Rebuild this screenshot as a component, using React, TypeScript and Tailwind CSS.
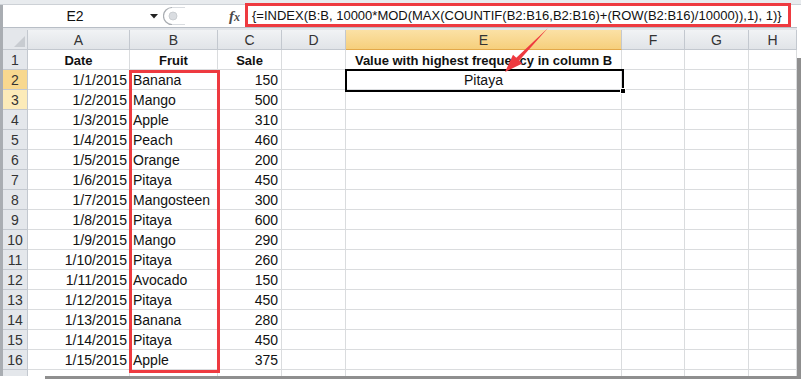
const rows: [string, string, string][] = [
  ['1/1/2015', 'Banana', '150'],
  ['1/2/2015', 'Mango', '500'],
  ['1/3/2015', 'Apple', '310'],
  ['1/4/2015', 'Peach', '460'],
  ['1/5/2015', 'Orange', '200'],
  ['1/6/2015', 'Pitaya', '450'],
  ['1/7/2015', 'Mangosteen', '300'],
  ['1/8/2015', 'Pitaya', '600'],
  ['1/9/2015', 'Mango', '290'],
  ['1/10/2015', 'Pitaya', '260'],
  ['1/11/2015', 'Avocado', '150'],
  ['1/12/2015', 'Pitaya', '450'],
  ['1/13/2015', 'Banana', '280'],
  ['1/14/2015', 'Pitaya', '450'],
  ['1/15/2015', 'Apple', '375'],
]

const cols = ['A', 'B', 'C', 'D', 'E', 'F', 'G', 'H']

const cell = 'h-[20px] leading-[21px] border-r border-b border-[#dadcde] whitespace-nowrap overflow-visible'

function RowHead({ n }: { n: number }) {
  const bg = n === 2 ? 'bg-[#f8d88f]' : n === 3 ? 'bg-[#fcebb9]' : 'bg-[#e4e7eb]'
  return (
    <div className={`h-[20px] leading-[21px] text-center text-[14px] text-[#333] border-r border-b border-[#c3c8cf] ${bg}`}>
      {n}
    </div>
  )
}

export default function App() {
  return (
    <div
      className="relative w-[801px] h-[379px] bg-white flex flex-col overflow-hidden text-[#111]"
      style={{ fontFamily: '"Liberation Sans", Arial, sans-serif' }}
    >
      {/* top strip */}
      <div className="h-[5px] bg-[#e8ebee] border-b border-[#cdd1d6]" />

      <div className="flex h-[371px]">
        <div className="w-[3px] bg-[#a9adb2]" />

        <div className="w-[794px] flex flex-col">
          {/* formula bar */}
          <div className="h-[22px] flex items-center bg-white">
            <div className="w-[144px] text-center text-[14px] leading-[22px]">E2</div>
            <div className="w-[13px] flex items-center justify-center">
              <svg width="8" height="5" viewBox="0 0 8 5">
                <path d="M0 0 L8 0 L4 4.5 Z" fill="#222" />
              </svg>
            </div>
            <div className="w-[3px]" />
            <svg width="22" height="20" viewBox="0 0 22 20" className="shrink-0">
              <path d="M9 1.5 A8.5 8.5 0 0 0 9 18.5" fill="none" stroke="#a9adb2" strokeWidth="1.2" />
              <path d="M9 1.5 L22 1.5 M9 18.5 L22 18.5" stroke="#d9dce0" strokeWidth="1" />
              <circle cx="10" cy="10" r="4" fill="#dadde1" stroke="#c4c8cc" strokeWidth="0.8" />
            </svg>
            <div className="w-[44px]" />
            <div
              className="w-[20px] text-[15px] italic font-bold text-[#4a4a4a] leading-[22px]"
              style={{ fontFamily: '"Liberation Serif", serif' }}
            >
              f<span className="text-[12px]">x</span>
            </div>
            <div className="pl-[3px] text-[13px] leading-[22px] whitespace-nowrap">
              {'{=INDEX(B:B, 10000*MOD(MAX(COUNTIF(B2:B16,B2:B16)+(ROW(B2:B16)/10000)),1), 1)}'}
            </div>
          </div>
          <div className="h-[3px] bg-[#e2e5e9] border-t border-[#b8bec6]" />

          {/* sheet */}
          <div className="relative grid grid-cols-[25px_102px_88px_64px_64px_276px_63px_64px_48px]">
            {/* corner */}
            <div className="h-[20px] bg-[#e4e7eb] border-r border-b border-[#c3c8cf] flex items-end justify-end p-[2px]">
              <svg width="11" height="11" viewBox="0 0 11 11">
                <path d="M11 0 L11 11 L0 11 Z" fill="#c8ccd1" />
              </svg>
            </div>
            {cols.map((c) => (
              <div
                key={c}
                className={`h-[20px] leading-[21px] text-center text-[14px] text-[#333] border-r border-b ${
                  c === 'E'
                    ? 'bg-linear-to-b from-[#fbe1a5] to-[#f6cf7c] border-r-[#c3c8cf] border-b-[#e2a84a]'
                    : 'bg-linear-to-b from-[#f1f3f5] to-[#e1e4e8] border-[#c3c8cf]'
                }`}
              >
                {c}
              </div>
            ))}

            {/* row 1 */}
            <RowHead n={1} />
            <div className={`${cell} text-center font-bold text-[13px]`}>Date</div>
            <div className={`${cell} text-center font-bold text-[13px]`}>Fruit</div>
            <div className={`${cell} text-center font-bold text-[13px]`}>Sale</div>
            <div className={cell} />
            <div className={`${cell} text-center font-bold text-[13px]`}>Value with highest frequency in column B</div>
            <div className={cell} />
            <div className={cell} />
            <div className={cell} />

            {rows.map((r, i) => (
              <div key={i} className="contents">
                <RowHead n={i + 2} />
                <div className={`${cell} text-right pr-[2px] text-[14px]`}>{r[0]}</div>
                <div className={`${cell} pl-[3px] text-[14px]`}>{r[1]}</div>
                <div className={`${cell} text-right pr-[3px] text-[14px]`}>{r[2]}</div>
                <div className={cell} />
                <div className={`${cell} text-center text-[14px]`}>{i === 0 ? 'Pitaya' : ''}</div>
                <div className={cell} />
                <div className={cell} />
                <div className={cell} />
              </div>
            ))}

            {/* partial row 17 */}
            <div className="h-[6px] bg-[#e4e7eb] border-r border-[#c3c8cf]" />
            {cols.map((c) => (
              <div key={c} className="h-[6px] border-r border-[#dadcde]" />
            ))}

            {/* active cell E2 */}
            <div className="absolute left-[342px] top-[39px] w-[279px] h-[23px] border-2 border-black pointer-events-none">
              <div className="absolute -right-[4px] -bottom-[4px] w-[6px] h-[6px] bg-black border border-white" />
            </div>

            {/* red box round B2:B16 */}
            <div className="absolute left-[126px] top-[40px] w-[91px] h-[303px] border-[3px] border-[#ee3a40] pointer-events-none" />
          </div>
        </div>

        <div className="w-[4px] flex flex-col">
          <div className="h-[53px]" />
          <div className="flex-1 bg-[#8f8f8f]" />
        </div>
      </div>

      {/* bottom shadow */}
      <div className="h-[3px] flex">
        <div className="w-[45px]" />
        <div className="flex-1 bg-[#8f8f8f]" />
      </div>

      {/* red box round the formula */}
      <div className="absolute left-[245px] top-[3px] w-[546px] h-[24px] border-[3px] border-[#ee3a40] pointer-events-none" />

      {/* arrow */}
      <svg className="absolute left-0 top-0 pointer-events-none" width="801" height="379" viewBox="0 0 801 379">
        <polygon
          points="548,28 519.2,60.6 522.3,63.5 505,72 513,54.7 516.3,57.8"
          fill="#ee3a40"
        />
      </svg>
    </div>
  )
}
